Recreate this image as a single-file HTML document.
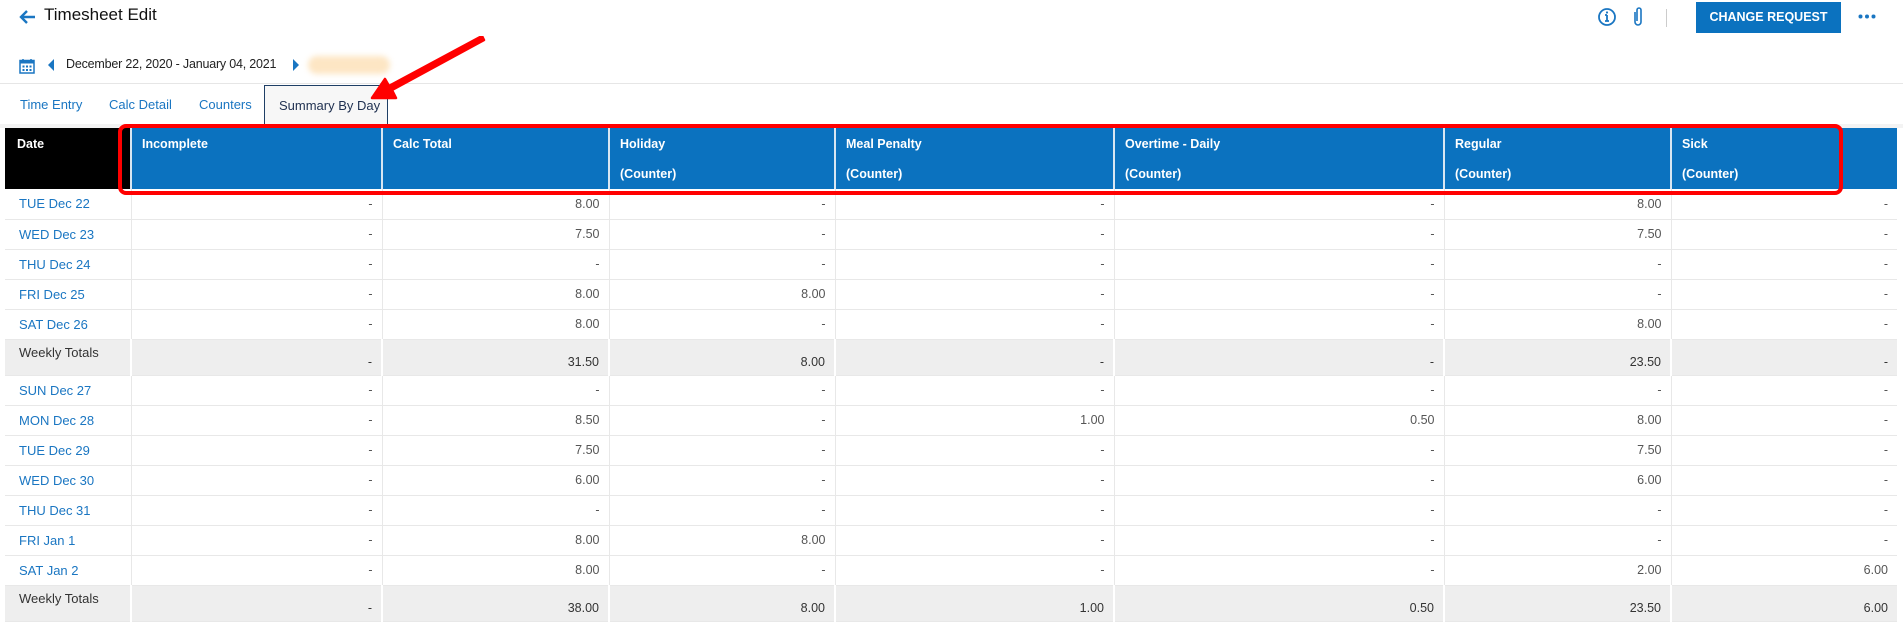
<!DOCTYPE html>
<html><head><meta charset="utf-8"><style>
*{margin:0;padding:0;box-sizing:border-box}
body{width:1903px;height:622px;overflow:hidden;background:#fff;font-family:"Liberation Sans",Arial,sans-serif;position:relative;color:#222}
.abs{position:absolute}
table{position:absolute;left:5px;top:128px;border-collapse:collapse;table-layout:fixed;width:1892px}
th{background:#0b72bf;color:#fff;font-size:12.5px;font-weight:bold;text-align:left;vertical-align:top;padding:9px 10px 0 10px;height:61px;border-left:2px solid #d8e6f2}
th.d{background:#000;border-left:none;padding-left:12px}
th span{display:block;margin-top:16px}
td{height:30px;border-bottom:1px solid #e8e8e8;border-left:1px solid #e8e8e8;font-size:12.5px;color:#555;text-align:right;padding:0 9px}
td.d{text-align:left;color:#1a76c2;padding-left:14px;border-left:none;font-size:13px}
tr.w td{background:#eeeeee;height:36px;vertical-align:bottom;padding-bottom:6px;color:#333;border-left:2px solid #fff}
tr.w td.d{vertical-align:top;padding-top:5px;color:#333;border-left:none}
</style></head><body>
<svg class="abs" style="left:18px;top:9px" width="18" height="16" viewBox="0 0 18 16"><path d="M17 8H3M9 2L3 8l6 6" stroke="#1a76c2" stroke-width="2.4" fill="none"/></svg>
<div class="abs" style="left:44px;top:5px;font-size:17px;color:#111">Timesheet Edit</div>
<svg class="abs" style="left:1597px;top:7px" width="20" height="20" viewBox="0 0 20 20"><circle cx="10" cy="10" r="8" stroke="#1a76c2" stroke-width="1.8" fill="none"/><path d="M10 8v6M8 14h4M8 8h2" stroke="#1a76c2" stroke-width="1.8"/><circle cx="10" cy="5.5" r="1.1" fill="#1a76c2"/></svg>
<svg class="abs" style="left:1632px;top:6px" width="12" height="22" viewBox="0 0 12 22"><path d="M3 6v10a3 3 0 0 0 6 0V4a2 2 0 0 0-4 0v11" stroke="#1a76c2" stroke-width="1.6" fill="none"/></svg>
<div class="abs" style="left:1666px;top:9px;width:1px;height:18px;background:#ccc"></div>
<div class="abs" style="left:1696px;top:2px;width:145px;height:31px;background:#0b72bf;color:#fff;font-weight:bold;font-size:12.5px;text-align:center;line-height:31px">CHANGE REQUEST</div>
<svg class="abs" style="left:1858px;top:14px" width="18" height="5"><circle cx="2.5" cy="2.5" r="2" fill="#1a76c2"/><circle cx="9" cy="2.5" r="2" fill="#1a76c2"/><circle cx="15.5" cy="2.5" r="2" fill="#1a76c2"/></svg>
<svg class="abs" style="left:19px;top:58px" width="16" height="16" viewBox="0 0 16 16"><rect x="1" y="2.5" width="14" height="12.5" fill="none" stroke="#1a76c2" stroke-width="1.5"/><rect x="1" y="2.5" width="14" height="3" fill="#1a76c2"/><path d="M4 1v3M12 1v3" stroke="#1a76c2" stroke-width="1.5"/><g fill="#1a76c2"><rect x="3.5" y="7.5" width="2" height="2"/><rect x="7" y="7.5" width="2" height="2"/><rect x="10.5" y="7.5" width="2" height="2"/><rect x="3.5" y="11" width="2" height="2"/><rect x="7" y="11" width="2" height="2"/><rect x="10.5" y="11" width="2" height="2"/></g></svg>
<svg class="abs" style="left:48px;top:59px" width="7" height="12"><path d="M6 0L0 6l6 6z" fill="#1a76c2"/></svg>
<div class="abs" style="left:66px;top:57px;font-size:12.5px;letter-spacing:-0.2px;color:#222">December 22, 2020 - January 04, 2021</div>
<svg class="abs" style="left:293px;top:59px" width="7" height="12"><path d="M0 0l6 6-6 6z" fill="#1a76c2"/></svg>
<div class="abs" style="left:308px;top:56px;width:82px;height:18px;background:#fde6c4;border-radius:9px;filter:blur(3px)"></div>
<div class="abs" style="left:0;top:83px;width:1903px;height:1px;background:#e6e6e6"></div>
<div class="abs" style="left:20px;top:97px;font-size:13px;color:#1a76c2">Time Entry</div>
<div class="abs" style="left:109px;top:97px;font-size:13px;color:#1a76c2">Calc Detail</div>
<div class="abs" style="left:199px;top:97px;font-size:13px;color:#1a76c2">Counters</div>
<div class="abs" style="left:264px;top:85px;width:124px;height:40px;border:1px solid #1f3f66;border-bottom:none;background:#f7f7f7;font-size:13px;color:#1f3050;padding:12px 0 0 14px">Summary By Day</div>
<div class="abs" style="left:0;top:124px;width:1903px;height:4px;background:#f3f3f3"></div>
<table>
<colgroup><col style="width:126px"><col style="width:251px"><col style="width:227px"><col style="width:226px"><col style="width:279px"><col style="width:330px"><col style="width:227px"><col style="width:226px"></colgroup>
<tr><th class="d">Date</th><th>Incomplete</th><th>Calc Total</th><th>Holiday<span>(Counter)</span></th><th>Meal Penalty<span>(Counter)</span></th><th>Overtime - Daily<span>(Counter)</span></th><th>Regular<span>(Counter)</span></th><th>Sick<span>(Counter)</span></th></tr>
<tr><td class="d">TUE Dec 22</td><td>-</td><td>8.00</td><td>-</td><td>-</td><td>-</td><td>8.00</td><td>-</td></tr>
<tr><td class="d">WED Dec 23</td><td>-</td><td>7.50</td><td>-</td><td>-</td><td>-</td><td>7.50</td><td>-</td></tr>
<tr><td class="d">THU Dec 24</td><td>-</td><td>-</td><td>-</td><td>-</td><td>-</td><td>-</td><td>-</td></tr>
<tr><td class="d">FRI Dec 25</td><td>-</td><td>8.00</td><td>8.00</td><td>-</td><td>-</td><td>-</td><td>-</td></tr>
<tr><td class="d">SAT Dec 26</td><td>-</td><td>8.00</td><td>-</td><td>-</td><td>-</td><td>8.00</td><td>-</td></tr>
<tr class="w"><td class="d">Weekly Totals</td><td>-</td><td>31.50</td><td>8.00</td><td>-</td><td>-</td><td>23.50</td><td>-</td></tr>
<tr><td class="d">SUN Dec 27</td><td>-</td><td>-</td><td>-</td><td>-</td><td>-</td><td>-</td><td>-</td></tr>
<tr><td class="d">MON Dec 28</td><td>-</td><td>8.50</td><td>-</td><td>1.00</td><td>0.50</td><td>8.00</td><td>-</td></tr>
<tr><td class="d">TUE Dec 29</td><td>-</td><td>7.50</td><td>-</td><td>-</td><td>-</td><td>7.50</td><td>-</td></tr>
<tr><td class="d">WED Dec 30</td><td>-</td><td>6.00</td><td>-</td><td>-</td><td>-</td><td>6.00</td><td>-</td></tr>
<tr><td class="d">THU Dec 31</td><td>-</td><td>-</td><td>-</td><td>-</td><td>-</td><td>-</td><td>-</td></tr>
<tr><td class="d">FRI Jan 1</td><td>-</td><td>8.00</td><td>8.00</td><td>-</td><td>-</td><td>-</td><td>-</td></tr>
<tr><td class="d">SAT Jan 2</td><td>-</td><td>8.00</td><td>-</td><td>-</td><td>-</td><td>2.00</td><td>6.00</td></tr>
<tr class="w"><td class="d">Weekly Totals</td><td>-</td><td>38.00</td><td>8.00</td><td>1.00</td><td>0.50</td><td>23.50</td><td>6.00</td></tr>
</table>
<div class="abs" style="left:118px;top:124px;width:1725px;height:71px;border:4px solid #f00;border-radius:8px"></div>
<svg class="abs" style="left:360px;top:36px" width="130" height="70"><path d="M124 4L32 54l4 8-24 0 13-19 4 7 93-50z" fill="#f00" stroke="#f00" stroke-width="2.5" stroke-linejoin="round"/></svg>
</body></html>
